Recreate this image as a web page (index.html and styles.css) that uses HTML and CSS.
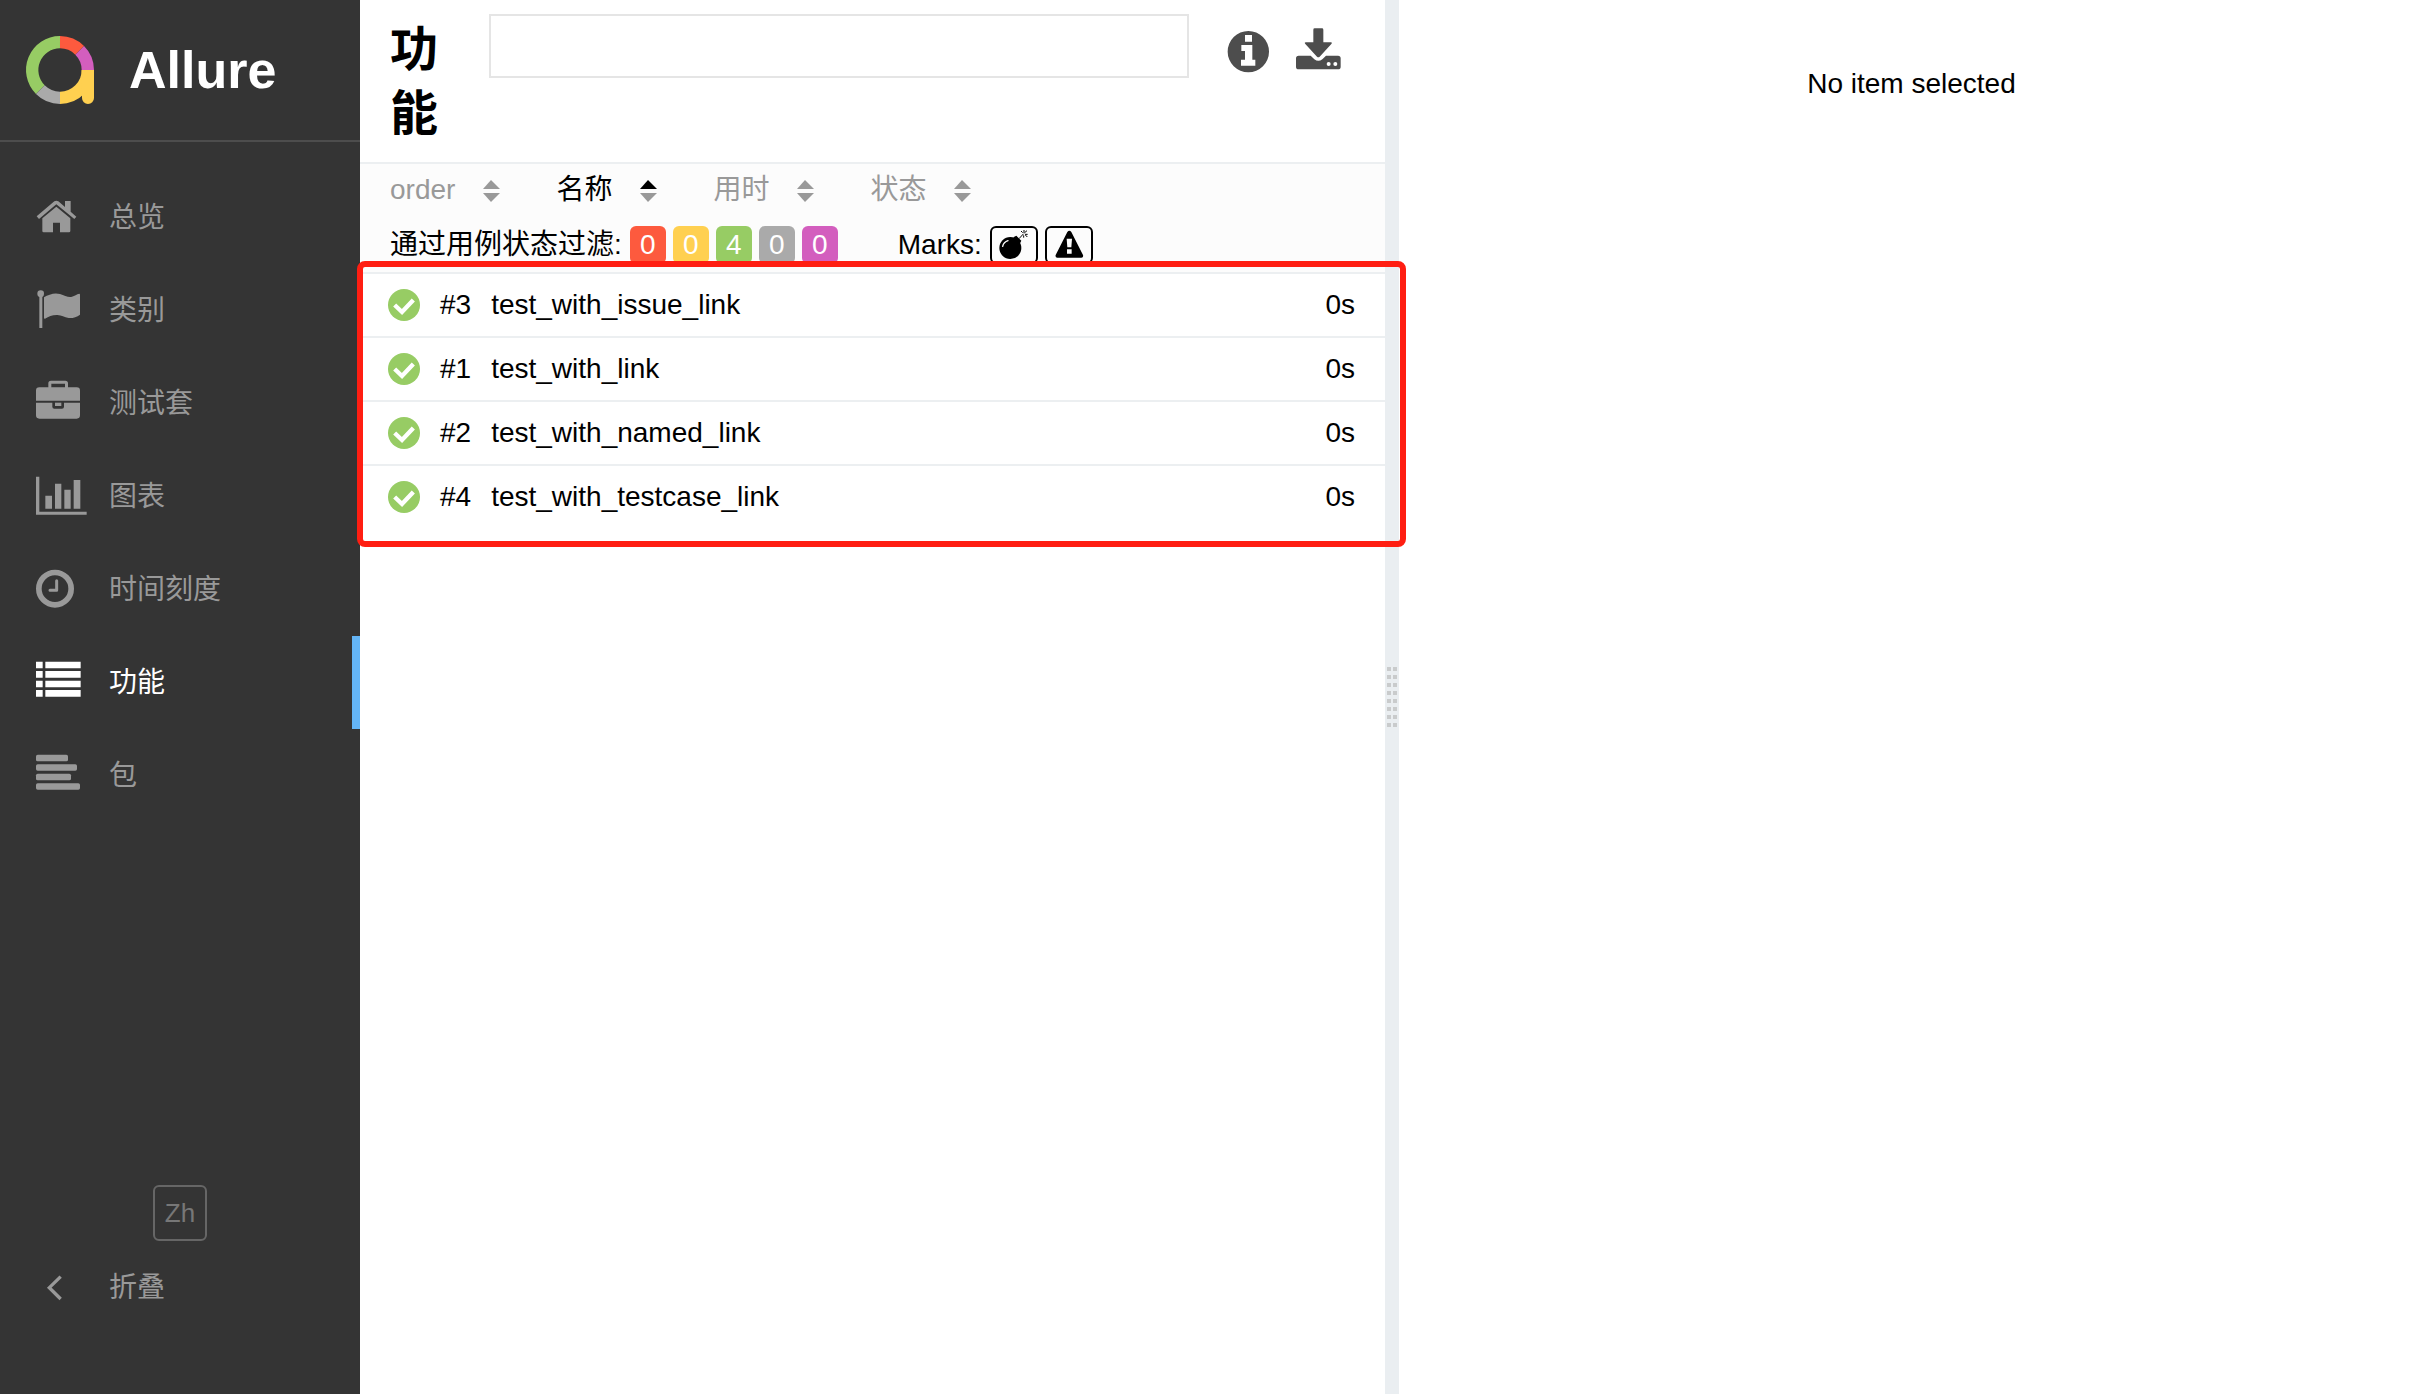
FILE: index.html
```html
<!DOCTYPE html>
<html lang="zh">
<head>
  <meta charset="UTF-8" />
  <title>Allure Report</title>
  <link rel="stylesheet" href="styles.css">
</head>
<body>
<div class="app">
  <nav class="side-nav">
    <a class="brand" href="#">
      <svg class="brand-logo" viewBox="0 0 204 204" fill="none" stroke-width="37">
        <path stroke="#97cc64" d="M43 161A83.5 83.5 0 0 1 102 18.500"/>
        <path stroke="#fd5a3e" d="M102 18.500A83.5 83.5 0 0 1 161 43"/>
        <path stroke="#d35ebe" d="M161 43A83.5 83.5 0 0 1 185.500 102"/>
        <path stroke="#aaa" d="M102 185.500A83.5 83.5 0 0 1 43 161"/>
        <path stroke="#ffd050" d="M185.500 102A83.5 83.5 0 0 1 102 185.500"/>
        <path fill="#ffd050" stroke="none" d="M167 102H204V186A18 18 0 0 1 168 186V160Z"/>
      </svg>
      <span class="brand-text">Allure</span>
    </a>

    <ul class="menu">
      <li><a class="menu-item" href="#">
        <svg class="menu-icon" viewBox="0 0 162 144">
          <path d="M2 67L55 22Q61 18 67 22L87 39V21H104V53L121 68L115 75L61 31L9 75Z"/>
          <path d="M61 38L103 73V111Q103 115 99 115H72V86H51V115H23Q19 115 19 111V73Z"/>
        </svg>总览</a></li>
      <li><a class="menu-item" href="#">
        <svg class="menu-icon" viewBox="0 0 162 144">
          <circle cx="14" cy="20" r="10"/>
          <path d="M10 24H19V123H10Z"/>
          <path d="M24 31C38 22 56 16 72 21C86 25 98 33 108 29C116 27 122 21 130 20Q132 20 132 23V83C122 90 110 94 98 93C84 91 76 83 62 84C48 84 38 89 27 95Q24 96 24 92Z"/>
        </svg>类别</a></li>
      <li><a class="menu-item" href="#">
        <svg class="menu-icon" viewBox="0 0 162 144">
          <path fill-rule="evenodd" d="M37 22V10Q37 2 45 2H88Q96 2 96 10V22H122Q132 22 132 32V62H0V32Q0 22 10 22ZM46 22H87V11H46Z"/>
          <path d="M0 68H49V80Q49 86 55 86H78Q84 86 84 80V68H132V106Q132 116 122 116H10Q0 116 0 106Z"/>
          <path d="M57 68H76V78H57Z"/>
        </svg>测试套</a></li>
      <li><a class="menu-item" href="#">
        <svg class="menu-icon" viewBox="0 0 162 144">
          <path d="M0 11H10V116H152V125H0ZM28 68H48V107H28ZM57 32H76V107H57ZM85 50H104V107H85ZM113 21H133V107H113Z"/>
        </svg>图表</a></li>
      <li><a class="menu-item" href="#">
        <svg class="menu-icon" viewBox="0 0 162 144">
          <circle cx="57" cy="68" r="48.500" fill="none" stroke="currentColor" stroke-width="17"/>
          <path fill="none" stroke="currentColor" stroke-width="9" stroke-linejoin="round" stroke-linecap="round" d="M62 44V73H42"/>
        </svg>时间刻度</a></li>
      <li><a class="menu-item active" href="#">
        <svg class="menu-icon" viewBox="0 0 162 144">
          <path d="M0 8H20V28H0ZM28 8H134V28H28ZM0 36H20V56H0ZM28 36H134V56H28ZM0 65H20V85H0ZM28 65H134V85H28ZM0 93H20V113H0ZM28 93H134V113H28Z"/>
        </svg>功能</a></li>
      <li><a class="menu-item" href="#">
        <svg class="menu-icon" viewBox="0 0 162 144">
          <rect y="8" width="96" height="20" rx="5"/>
          <rect y="37" width="123" height="19" rx="5"/>
          <rect y="65" width="105" height="20" rx="5"/>
          <rect y="94" width="132" height="19" rx="5"/>
        </svg>包</a></li>
    </ul>

    <div class="side-footer">
      <button class="language" type="button">Zh</button>
      <a class="menu-item" href="#">
        <svg class="menu-icon" viewBox="0 0 162 144">
          <path fill="none" stroke="currentColor" stroke-width="10" d="M74 38L40 71L74 105"/>
        </svg>折叠</a>
    </div>
  </nav>

  <main class="pane">
    <header class="pane-header">
      <h1 class="pane-title">功能</h1>
      <input class="search" type="text" aria-label="搜索">
      <div class="pane-tools">
        <button class="tool" type="button" aria-label="信息">
          <svg viewBox="0 0 135 135">
            <path fill-rule="evenodd" d="M67 6A62 62 0 1 0 67 130A62 62 0 1 0 67 6ZM57 18H78V38H57ZM46 48H79V92H88V110H45V92H57V66H46Z"/>
          </svg>
        </button>
        <button class="tool" type="button" aria-label="下载">
          <svg viewBox="0 0 135 135">
            <path d="M52 2Q52-2 56-2H78Q82-2 82 2V40H105Q110 40 106 45L71 83Q67 87 63 83L28 45Q24 40 29 40H52Z"/>
            <path fill-rule="evenodd" d="M8 80H44L55 91Q67 100 79 91L90 80H126Q134 80 134 88V113Q134 121 126 121H8Q0 121 0 113V88Q0 80 8 80ZM98 99A6 6 0 1 0 98 111A6 6 0 1 0 98 99ZM118 99A6 6 0 1 0 118 111A6 6 0 1 0 118 99Z"/>
          </svg>
        </button>
      </div>
    </header>

    <section class="controls">
      <div class="sorter">
        <button class="sort" type="button">order
          <svg class="sort-icon" viewBox="0 0 17 22"><path d="M8 0L17 9H0Z"/><path class="down" d="M0 13H17L8 22Z"/></svg></button>
        <button class="sort sorted" type="button">名称
          <svg class="sort-icon" viewBox="0 0 17 22"><path d="M8 0L17 9H0Z"/><path class="down" d="M0 13H17L8 22Z"/></svg></button>
        <button class="sort" type="button">用时
          <svg class="sort-icon" viewBox="0 0 17 22"><path d="M8 0L17 9H0Z"/><path class="down" d="M0 13H17L8 22Z"/></svg></button>
        <button class="sort" type="button">状态
          <svg class="sort-icon" viewBox="0 0 17 22"><path d="M8 0L17 9H0Z"/><path class="down" d="M0 13H17L8 22Z"/></svg></button>
      </div>
      <div class="filters">
        <span>通过用例状态过滤:</span>
        <div class="filter-group">
          <button class="chip failed" type="button">0</button>
          <button class="chip broken" type="button">0</button>
          <button class="chip passed" type="button">4</button>
          <button class="chip skipped" type="button">0</button>
          <button class="chip unknown" type="button">0</button>
        </div>
        <span class="marks-label">Marks:</span>
        <div class="filter-group">
          <button class="mark" type="button" aria-label="Flaky">
            <svg viewBox="0 0 96 90">
              <circle cx="37" cy="54" r="33"/>
              <path d="M46 22L55 17L70 32L65 42Z"/>
              <path fill="none" stroke="#fff" stroke-width="4" stroke-linecap="round" d="M14 49Q17 36 30 32"/>
              <path fill="none" stroke="currentColor" stroke-width="3" d="M63 26L76 12M78 10V0M81 13H89M80 8L87 2M82 15L88 21M77 16V23M74 8L69 3"/>
            </svg>
          </button>
          <button class="mark" type="button" aria-label="New failed">
            <svg viewBox="0 0 96 90">
              <path fill-rule="evenodd" d="M43 6Q49 -2 55 6L90 75Q92 83 85 83H13Q6 83 8 75ZM41 26L43 52H55L57 26ZM42 58V71H56V58Z"/>
            </svg>
          </button>
        </div>
      </div>
    </section>

    <section class="tree">
      <a class="leaf" href="#">
        <svg class="status" viewBox="0 0 96 96"><circle cx="48" cy="48" r="48"/><path d="M20 48L42 69L76 33"/></svg>
        <span class="leaf-order">#3</span>
        <span class="leaf-name">test_with_issue_link</span>
        <span>0s</span>
      </a>
      <a class="leaf" href="#">
        <svg class="status" viewBox="0 0 96 96"><circle cx="48" cy="48" r="48"/><path d="M20 48L42 69L76 33"/></svg>
        <span class="leaf-order">#1</span>
        <span class="leaf-name">test_with_link</span>
        <span>0s</span>
      </a>
      <a class="leaf" href="#">
        <svg class="status" viewBox="0 0 96 96"><circle cx="48" cy="48" r="48"/><path d="M20 48L42 69L76 33"/></svg>
        <span class="leaf-order">#2</span>
        <span class="leaf-name">test_with_named_link</span>
        <span>0s</span>
      </a>
      <a class="leaf" href="#">
        <svg class="status" viewBox="0 0 96 96"><circle cx="48" cy="48" r="48"/><path d="M20 48L42 69L76 33"/></svg>
        <span class="leaf-order">#4</span>
        <span class="leaf-name">test_with_testcase_link</span>
        <span>0s</span>
      </a>
      <div class="highlight"></div>
    </section>
  </main>

  <div class="gutter"><div class="grip"></div></div>

  <aside class="detail">No item selected</aside>
</div>
</body>
</html>
```
FILE: styles.css
```css
* {
    box-sizing: border-box;
}

body {
    margin: 0;
    font-family: "Liberation Sans", "Noto Sans CJK SC", Arial, sans-serif;
    font-size: 28px;
    line-height: 36px;
    color: #000;
    background-color: #fff;
}

a {
    color: inherit;
    text-decoration: none;
}

button {
    font: inherit;
    color: inherit;
    background: none;
    border: 0;
    padding: 0;
    cursor: pointer;
}

svg {
    display: block;
    fill: currentColor;
    overflow: visible;
}

.app {
    display: flex;
    min-height: 100vh;
}

/* sidebar */
.side-nav {
    display: flex;
    flex-direction: column;
    flex: 0 0 360px;
    background-color: #343434;
    color: #999;
}

.brand {
    display: flex;
    align-items: center;
    gap: 35px;
    height: 142px;
    padding-left: 26px;
    border-bottom: 2px solid #4d4d4d;
    color: #fff;
}

.brand-logo {
    width: 68px;
    height: 68px;
}

.brand-logo path:not([fill]) {
    fill: none;
}

.brand-text {
    font-size: 52px;
    font-weight: bold;
    line-height: 60px;
}

.menu {
    list-style: none;
    margin: 0;
    padding: 29px 0 0;
}

.menu-item {
    display: flex;
    align-items: center;
    gap: 19px;
    height: 93px;
    padding-left: 36px;
}

.menu-item.active {
    color: #fff;
    border-right: 8px solid #64b5f6;
}

.menu-icon {
    width: 54px;
    height: 48px;
}

.side-footer {
    margin-top: auto;
    padding-bottom: 60px;
}

.language {
    display: block;
    width: 54px;
    height: 56px;
    margin: 0 auto;
    border: 2px solid #666;
    border-radius: 6px;
    font-size: 26px;
    color: #777;
}

/* test list */
.pane,
.detail {
    flex: 1 1 0;
    min-width: 0;
}

.pane-header {
    display: flex;
    align-items: flex-start;
    padding: 14px 44px 16px 30px;
    border-bottom: 2px solid #eceff1;
}

.pane-title {
    width: 49px;
    margin: 4px 50px 0 0;
    font-size: 48px;
    line-height: 64px;
}

.search {
    flex: 1;
    min-width: 0;
    height: 64px;
    border: 2px solid #e5e5e5;
    padding: 0 16px;
    font: inherit;
}

.pane-tools {
    display: flex;
    gap: 25px;
    margin: 15px 0 0 37px;
    color: #4d4d4d;
}

.tool svg {
    width: 45px;
    height: 45px;
}

.controls {
    padding: 8px 30px;
    background-color: #fcfcfc;
}

.sorter {
    display: flex;
    gap: 56px;
}

.sort {
    display: flex;
    align-items: center;
    gap: 28px;
    color: #999;
}

.sorted {
    color: #000;
}

.sort-icon {
    width: 17px;
    height: 22px;
    margin-top: 2px;
}

.sort-icon .down {
    fill: #999;
}

.filters {
    display: flex;
    align-items: center;
    gap: 8px;
    margin-top: 18px;
}

.filter-group {
    display: flex;
    gap: 7px;
}

.marks-label {
    margin-left: 52px;
}

.chip {
    width: 36px;
    height: 38px;
    border-radius: 6px;
    color: #fff;
}

.failed { background-color: #fd5a3e; }
.broken { background-color: #ffd050; }
.passed { background-color: #97cc64; }
.skipped { background-color: #aaa; }
.unknown { background-color: #d35ebe; }

.mark {
    display: flex;
    align-items: center;
    justify-content: center;
    width: 48px;
    height: 38px;
    border: 2px solid #000;
    border-radius: 6px;
}

.mark svg {
    width: 32px;
    height: 30px;
}

.tree {
    position: relative;
    padding-bottom: 19px;
}

.leaf {
    display: flex;
    align-items: center;
    gap: 20px;
    height: 64px;
    padding: 0 30px 0 28px;
    border-top: 2px solid #eceff1;
}

.status {
    width: 32px;
    height: 32px;
    fill: #97cc64;
}

.status path {
    fill: none;
    stroke: #fff;
    stroke-width: 13px;
}

.leaf-name {
    flex: 1;
}

/* red frame drawn over the list */
.highlight {
    position: absolute;
    inset: -11px -21px 0 -3px;
    border: 6px solid #ff1e12;
    border-radius: 8px;
    pointer-events: none;
}

/* splitter */
.gutter {
    display: flex;
    align-items: center;
    justify-content: center;
    flex: 0 0 14px;
    background-color: #eaeef1;
}

.grip {
    width: 10px;
    height: 60px;
    background-image: conic-gradient(from 270deg at 4px 4px, #c9cbcc 90deg, transparent 0);
    background-size: 6px 8px;
}

.detail {
    padding-top: 66px;
    text-align: center;
}
```
